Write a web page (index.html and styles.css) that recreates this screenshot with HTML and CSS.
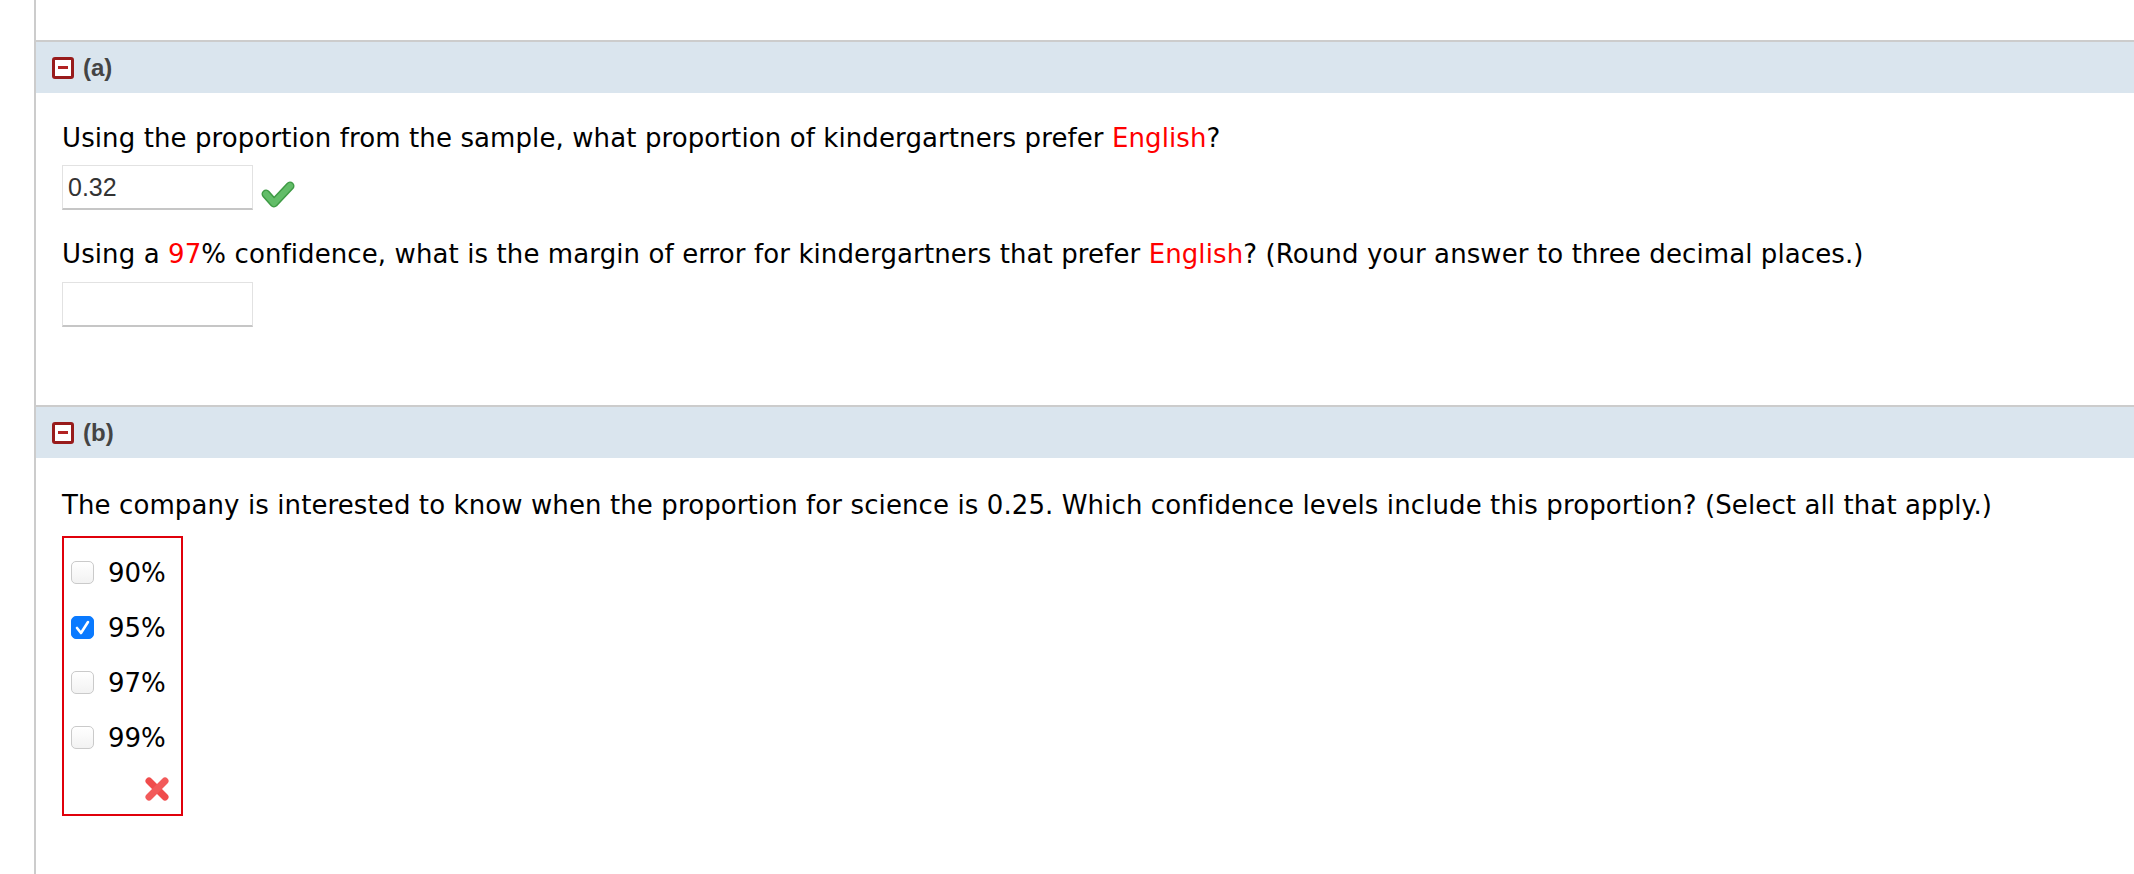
FILE: index.html
```html
<!DOCTYPE html>
<html lang="en">
<head>
  <meta charset="UTF-8">
  <meta name="viewport" content="width=device-width, initial-scale=1.0">
  <title>Confidence Intervals</title>
  <link rel="stylesheet" href="styles.css">
</head>
<body>
  <div class="page">

    <section class="part">
      <div class="part-head">
        <span class="toggle"><span class="toggle-bar"></span></span>
        <span class="part-label">(a)</span>
      </div>
      <div class="part-body part-body-a">
        <p class="question">Using the proportion from the sample, what proportion of kindergartners prefer <span class="hl">English</span>?</p>
        <div class="answer">
          <input class="answer-input" type="text" value="0.32">
          <svg class="mark-ok" width="34" height="30" viewBox="0 0 34 30">
            <polyline points="5,15 13,24 29,7" fill="none" stroke="#3f9b45" stroke-width="9" stroke-linecap="round" stroke-linejoin="round"/>
            <polyline points="5,15 13,24 29,7" fill="none" stroke="#62bd68" stroke-width="6" stroke-linecap="round" stroke-linejoin="round"/>
          </svg>
        </div>
        <p class="question q-gap">Using a <span class="hl">97</span>% confidence, what is the margin of error for kindergartners that prefer <span class="hl">English</span>? (Round your answer to three decimal places.)</p>
        <div class="answer answer-gap">
          <input class="answer-input" type="text" value="">
        </div>
      </div>
    </section>

    <section class="part">
      <div class="part-head">
        <span class="toggle"><span class="toggle-bar"></span></span>
        <span class="part-label">(b)</span>
      </div>
      <div class="part-body part-body-b">
        <p class="question">The company is interested to know when the proportion for science is 0.25. Which confidence levels include this proportion? (Select all that apply.)</p>
        <div class="choices">
          <label class="choice"><span class="box"></span>90%</label>
          <label class="choice">
            <span class="box box-checked">
              <svg width="23" height="23" viewBox="0 0 23 23"><polyline points="6,12 10,17 17,6" fill="none" stroke="#fff" stroke-width="2.6" stroke-linecap="round" stroke-linejoin="round"/></svg>
            </span>95%
          </label>
          <label class="choice"><span class="box"></span>97%</label>
          <label class="choice"><span class="box"></span>99%</label>
          <div class="feedback">
            <svg width="28" height="28" viewBox="0 0 28 28">
              <line x1="6" y1="6" x2="22" y2="22" stroke="#f04c4c" stroke-width="7" stroke-linecap="round"/>
              <line x1="22" y1="6" x2="6" y2="22" stroke="#f25a5a" stroke-width="7" stroke-linecap="round"/>
            </svg>
          </div>
        </div>
      </div>
    </section>

  </div>
</body>
</html>
```

FILE: styles.css
```css
body {
  margin: 0;
  background: #fff;
  color: #000;
  font-family: 'DejaVu Sans', Verdana, sans-serif;
}

.page {
  margin-left: 34px;
  border-left: 2px solid #cccccc;
  min-height: 100vh;
  padding-top: 40px;
  box-sizing: border-box;
}

.part-head {
  display: flex;
  align-items: center;
  height: 51px;
  padding-left: 16px;
  border-top: 2px solid #cccccc;
  background-color: #dae5ee;
}

.toggle {
  display: flex;
  align-items: center;
  justify-content: center;
  width: 22px;
  height: 22px;
  box-sizing: border-box;
  border: 3px solid #981b1b;
  border-radius: 3px;
  background: #fff;
}

.toggle-bar {
  width: 10px;
  height: 3px;
  background: #b22222;
}

.part-label {
  margin-left: 9px;
  font-family: 'Liberation Sans', Arial, sans-serif;
  font-size: 24px;
  font-weight: bold;
  color: #444;
}

.part-body {
  padding: 28px 0 0 26px;
}

.part-body-a {
  padding-bottom: 78px;
}

.part-body-b {
  padding-top: 30px;
}

.question {
  margin: 0;
  font-size: 26px;
  line-height: 34px;
  letter-spacing: 0.1px;
}

.q-gap {
  margin-top: 27px;
}

.hl {
  color: #ff0000;
}

.answer {
  display: flex;
  align-items: flex-end;
  margin-top: 10px;
}

.answer-gap {
  margin-top: 11px;
}

.answer-input {
  width: 191px;
  height: 45px;
  box-sizing: border-box;
  margin: 0;
  padding: 0 5px;
  border: 1px solid #e2e2e2;
  border-bottom: 2px solid #c6c6c6;
  border-radius: 0;
  font-family: 'Liberation Sans', Arial, sans-serif;
  font-size: 25px;
  color: #333;
  outline: none;
}

.mark-ok {
  margin-left: 8px;
  margin-bottom: 1px;
}

.choices {
  width: 121px;
  box-sizing: border-box;
  margin-top: 14px;
  padding: 7px 10px 11px 7px;
  border: 2px solid #e0000b;
}

.choice {
  display: flex;
  align-items: center;
  height: 55px;
  font-size: 26px;
}

.box {
  display: inline-block;
  flex-shrink: 0;
  width: 23px;
  height: 23px;
  box-sizing: border-box;
  margin-right: 14px;
  border: 1px solid #cacaca;
  border-radius: 5px;
  background: linear-gradient(#ffffff, #f2f2f2);
}

.box-checked {
  border-color: #0a7aff;
  background: #0a7aff;
}

.box-checked svg {
  display: block;
  margin: -1px;
}

.feedback {
  display: flex;
  justify-content: flex-end;
  margin-top: 10px;
}
```
